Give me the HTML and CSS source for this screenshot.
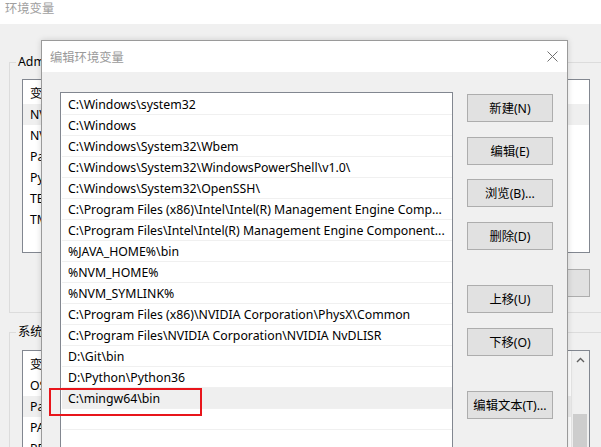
FILE: index.html
```html
<!DOCTYPE html>
<html lang="zh-CN">
<head>
  <meta charset="UTF-8" />
  <title>编辑环境变量</title>
  <link rel="stylesheet" href="styles.css">
</head>
<body>
  <div class="desk">
    <div class="win">
      <div class="win-title">环境变量</div>
      <div class="win-body">
        <fieldset class="group">
          <legend>Administrator 的用户变量(U)</legend>
          <div class="list">
            <div class="list-head">变量</div>
            <div class="list-row selected">NVM_HOME</div>
            <div class="list-row">NVM_SYMLINK</div>
            <div class="list-row">Path</div>
            <div class="list-row">PyCharm</div>
            <div class="list-row">TEMP</div>
            <div class="list-row">TMP</div>
          </div>
          <div class="group-buttons">
            <div class="btn">新建(N)...</div>
            <div class="btn">编辑(E)...</div>
            <div class="btn">删除(D)</div>
          </div>
        </fieldset>

        <fieldset class="group">
          <legend>系统变量(S)</legend>
          <div class="list list-tall">
            <div class="list-rows">
              <div class="list-head">变量</div>
              <div class="list-row">OS</div>
              <div class="list-row selected">Path</div>
              <div class="list-row">PATHEXT</div>
              <div class="list-row">PROCESSOR_ARCHITECTURE</div>
            </div>
            <div class="scrollbar">
              <div class="scroll-up">
                <svg width="9" height="6" viewBox="0 0 9 6"><path d="M1 5 L4.5 1.5 L8 5" fill="none" stroke="#606060" stroke-width="1.4"/></svg>
              </div>
              <div class="scroll-thumb"></div>
            </div>
          </div>
        </fieldset>
      </div>
    </div>

    <div class="dialog">
      <div class="dialog-title">
        <span>编辑环境变量</span>
        <svg class="close" width="11" height="11" viewBox="0 0 11 11"><path d="M0.5 0.5 L10.5 10.5 M10.5 0.5 L0.5 10.5" stroke="#707070" stroke-width="1"/></svg>
      </div>
      <div class="dialog-body">
        <div class="path-list">
          <div class="path-row">C:\Windows\system32</div>
          <div class="path-row">C:\Windows</div>
          <div class="path-row">C:\Windows\System32\Wbem</div>
          <div class="path-row">C:\Windows\System32\WindowsPowerShell\v1.0\</div>
          <div class="path-row">C:\Windows\System32\OpenSSH\</div>
          <div class="path-row">C:\Program Files (x86)\Intel\Intel(R) Management Engine Comp...</div>
          <div class="path-row">C:\Program Files\Intel\Intel(R) Management Engine Component...</div>
          <div class="path-row">%JAVA_HOME%\bin</div>
          <div class="path-row">%NVM_HOME%</div>
          <div class="path-row">%NVM_SYMLINK%</div>
          <div class="path-row">C:\Program Files (x86)\NVIDIA Corporation\PhysX\Common</div>
          <div class="path-row">C:\Program Files\NVIDIA Corporation\NVIDIA NvDLISR</div>
          <div class="path-row">D:\Git\bin</div>
          <div class="path-row">D:\Python\Python36</div>
          <div class="path-row selected">C:\mingw64\bin</div>
          <div class="path-row"></div>
        </div>
        <div class="dialog-buttons">
          <div class="btn">新建(N)</div>
          <div class="btn">编辑(E)</div>
          <div class="btn">浏览(B)...</div>
          <div class="btn">删除(D)</div>
          <div class="btn spaced">上移(U)</div>
          <div class="btn">下移(O)</div>
          <div class="btn spaced">编辑文本(T)...</div>
        </div>
      </div>
    </div>

    <div class="mark"></div>
  </div>
</body>
</html>
```

FILE: styles.css
```css
body {
  margin: 0;
  font-family: "Segoe UI", "Noto Sans", "Noto Sans CJK SC", sans-serif;
  font-size: 12.3px;
  color: #000;
}

.desk {
  position: relative;
  width: 601px;
  height: 447px;
  overflow: hidden;
  background: #f0f0f0;
}

/* background window */
.win {
  width: 610px;
}

.win-title {
  height: 24px;
  padding-left: 5px;
  line-height: 18px;
  background: #fff;
  color: #a0a0a0;
}

.win-body {
  padding: 30px 0 0 9px;
}

.group {
  margin: 0;
  padding: 9px 12px 15px 12px;
  border: 1px solid #dcdcdc;
  min-width: 0;
}

.group + .group {
  margin-top: 11px;
  padding-top: 10px;
}

.group legend {
  padding: 0 2px;
  margin-left: -6px;
  line-height: 16px;
}

.list {
  height: 172px;
  background: #fff;
  border: 1px solid #828790;
  width: 566px;
}

.list-head {
  height: 24px;
  line-height: 28px;
  padding-left: 7px;
}

.list-row {
  height: 21px;
  line-height: 22px;
  padding-left: 7px;
}

.list-row.selected {
  background: #efefef;
}

.group-buttons {
  display: flex;
  justify-content: flex-end;
  gap: 8px;
  margin-top: 16px;
  width: 568px;
}

.list-tall {
  display: flex;
  height: 120px;
}

.list-rows {
  flex: 1;
}

.scrollbar {
  width: 17px;
  background: #f0f0f0;
  border-left: 1px solid #e6e6e6;
  display: flex;
  flex-direction: column;
}

.scroll-up {
  height: 17px;
  display: flex;
  align-items: center;
  justify-content: center;
}

.scroll-thumb {
  margin: 46px 2px 0 1px;
  flex: 1;
  background: #cdcdcd;
}

/* buttons */
.btn {
  box-sizing: border-box;
  width: 86px;
  height: 28px;
  line-height: 28px;
  text-align: center;
  background: #e1e1e1;
  border: 1px solid #adadad;
  white-space: nowrap;
}

.group-buttons .btn {
  width: 88px;
}

/* foreground dialog */
.dialog {
  position: absolute;
  left: 41px;
  top: 40px;
  width: 525px;
  height: 440px;
  background: #f0f0f0;
  border: 1px solid #9a9a9a;
  box-shadow: 0 0 6px rgba(0, 0, 0, 0.15);
}

.dialog-title {
  height: 31px;
  background: #fff;
  display: flex;
  align-items: center;
  justify-content: space-between;
  padding: 0 9px 0 8px;
  color: #9a9a9a;
}

.dialog-body {
  display: flex;
  gap: 14px;
  padding: 20px 14px 0 18px;
}

.path-list {
  box-sizing: border-box;
  width: 393px;
  height: 360px;
  background: #fff;
  border: 1px solid #828790;
  padding: 1px 0 0 1px;
}

.path-row {
  height: 20px;
  line-height: 22px;
  padding-left: 6px;
  border-bottom: 1px solid #f0f0f0;
  white-space: nowrap;
  overflow: hidden;
}

.path-row.selected {
  background: #efefef;
}

.dialog-buttons {
  display: flex;
  flex-direction: column;
  gap: 14.5px;
  padding-top: 2px;
}

.dialog-buttons .spaced {
  margin-top: 21px;
}

/* red annotation box */
.mark {
  position: absolute;
  left: 49px;
  top: 388px;
  width: 149px;
  height: 24px;
  border: 2px solid #e8151b;
}
```
